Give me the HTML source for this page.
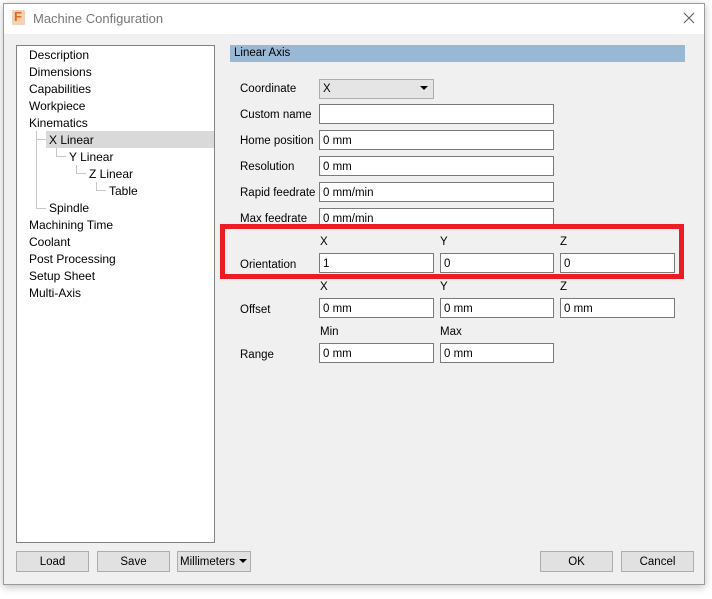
<!DOCTYPE html>
<html><head><style>
body{margin:0;width:712px;height:599px;background:#fff;font-family:"Liberation Sans",sans-serif;font-size:12px;color:#000;position:relative;overflow:hidden}
.a{position:absolute}
#win{left:3px;top:3px;width:700px;height:580px;border:1px solid #9a9a9a;background:#f0f0f0;box-shadow:0 2px 8px rgba(0,0,0,.25)}
#title{left:4px;top:4px;width:700px;height:30px;background:#fff}
.in{position:absolute;background:#fff;border:1px solid #7a7a7a;box-sizing:border-box;height:20px;padding-left:3px;line-height:20px;font-size:11.5px}
.lb{position:absolute;font-size:11.5px}
.btn{position:absolute;height:21px;background:#e1e1e1;border:1px solid #adadad;box-sizing:border-box;text-align:center;line-height:20px;font-size:11.5px}
.ti{position:absolute;font-size:12px;line-height:17px}
.ln{position:absolute;background:#c8c8c8}
</style></head><body>
<div id="win" class="a"></div>
<div id="title" class="a"></div>
<div class="a" style="left:12px;top:10px;width:13px;height:15px;background:#f3d1b4;border-radius:1px"></div>
<div class="a" style="left:14px;top:9px;font-weight:bold;color:#e26a1e;font-size:13px">F</div>
<div class="a" style="left:33px;top:11px;font-size:13px;color:#777">Machine Configuration</div>
<svg class="a" style="left:683px;top:12px" width="12" height="12"><path d="M1 1L11 11M11 1L1 11" stroke="#666" stroke-width="1.2"/></svg>

<div class="a" style="left:16px;top:45px;width:197px;height:496px;background:#fff;border:1px solid #828282"></div>
<div class="a" style="left:46px;top:131px;width:168px;height:17px;background:#d9d9d9"></div>
<div class="ln" style="left:36px;top:131px;width:1px;height:78px"></div>
<div class="ln" style="left:36px;top:139px;width:10px;height:1px"></div>
<div class="ln" style="left:36px;top:208px;width:10px;height:1px"></div>
<div class="ln" style="left:56px;top:148px;width:1px;height:9px"></div>
<div class="ln" style="left:56px;top:156px;width:10px;height:1px"></div>
<div class="ln" style="left:76px;top:165px;width:1px;height:9px"></div>
<div class="ln" style="left:76px;top:173px;width:10px;height:1px"></div>
<div class="ln" style="left:96px;top:182px;width:1px;height:9px"></div>
<div class="ln" style="left:96px;top:190px;width:10px;height:1px"></div>
<div class="ti" style="left:29px;top:47px">Description</div>
<div class="ti" style="left:29px;top:64px">Dimensions</div>
<div class="ti" style="left:29px;top:81px">Capabilities</div>
<div class="ti" style="left:29px;top:98px">Workpiece</div>
<div class="ti" style="left:29px;top:115px">Kinematics</div>
<div class="ti" style="left:49px;top:132px">X Linear</div>
<div class="ti" style="left:69px;top:149px">Y Linear</div>
<div class="ti" style="left:89px;top:166px">Z Linear</div>
<div class="ti" style="left:109px;top:183px">Table</div>
<div class="ti" style="left:49px;top:200px">Spindle</div>
<div class="ti" style="left:29px;top:217px">Machining Time</div>
<div class="ti" style="left:29px;top:234px">Coolant</div>
<div class="ti" style="left:29px;top:251px">Post Processing</div>
<div class="ti" style="left:29px;top:268px">Setup Sheet</div>
<div class="ti" style="left:29px;top:285px">Multi-Axis</div>

<div class="a" style="left:230px;top:45px;width:455px;height:17px;background:#99b8d6"></div>
<div class="lb" style="left:234px;top:47px">Linear Axis</div>

<div class="lb" style="left:240px;top:83px">Coordinate</div>
<div class="a" style="left:319px;top:79px;width:115px;height:20px;background:#e5e5e5;border:1px solid #adadad;box-sizing:border-box"></div>
<div class="lb" style="left:323px;top:83px">X</div>
<svg class="a" style="left:420px;top:86px" width="8" height="5"><path d="M0 0H8L4 4Z" fill="#000"/></svg>

<div class="lb" style="left:240px;top:109px">Custom name</div><div class="in" style="left:319px;top:104px;width:235px"></div>
<div class="lb" style="left:240px;top:135px">Home position</div><div class="in" style="left:319px;top:130px;width:235px">0 mm</div>
<div class="lb" style="left:240px;top:161px">Resolution</div><div class="in" style="left:319px;top:156px;width:235px">0 mm</div>
<div class="lb" style="left:240px;top:187px">Rapid feedrate</div><div class="in" style="left:319px;top:182px;width:235px">0 mm/min</div>
<div class="lb" style="left:240px;top:213px">Max feedrate</div><div class="in" style="left:319px;top:208px;width:235px">0 mm/min</div>

<div class="a" style="left:220px;top:224px;width:454px;height:45px;border:5px solid #ed1c24;background:#f0f0f0"></div>
<div class="lb" style="left:320px;top:236px">X</div><div class="lb" style="left:440px;top:236px">Y</div><div class="lb" style="left:560px;top:236px">Z</div>
<div class="lb" style="left:240px;top:259px">Orientation</div>
<div class="in" style="left:319px;top:253px;width:115px">1</div>
<div class="in" style="left:440px;top:253px;width:114px">0</div>
<div class="in" style="left:560px;top:253px;width:115px">0</div>

<div class="lb" style="left:320px;top:281px">X</div><div class="lb" style="left:440px;top:281px">Y</div><div class="lb" style="left:560px;top:281px">Z</div>
<div class="lb" style="left:240px;top:304px">Offset</div>
<div class="in" style="left:319px;top:298px;width:115px">0 mm</div>
<div class="in" style="left:440px;top:298px;width:114px">0 mm</div>
<div class="in" style="left:560px;top:298px;width:115px">0 mm</div>

<div class="lb" style="left:320px;top:326px">Min</div><div class="lb" style="left:440px;top:326px">Max</div>
<div class="lb" style="left:240px;top:349px">Range</div>
<div class="in" style="left:319px;top:343px;width:115px">0 mm</div>
<div class="in" style="left:440px;top:343px;width:114px">0 mm</div>

<div class="btn" style="left:16px;top:551px;width:73px">Load</div>
<div class="btn" style="left:97px;top:551px;width:73px">Save</div>
<div class="btn" style="left:177px;top:551px;width:74px;text-align:left;padding-left:2px">Millimeters</div>
<svg class="a" style="left:239px;top:559px" width="8" height="5"><path d="M0 0H8L4 4Z" fill="#000"/></svg>
<div class="btn" style="left:540px;top:551px;width:73px">OK</div>
<div class="btn" style="left:621px;top:551px;width:73px">Cancel</div>
</body></html>
